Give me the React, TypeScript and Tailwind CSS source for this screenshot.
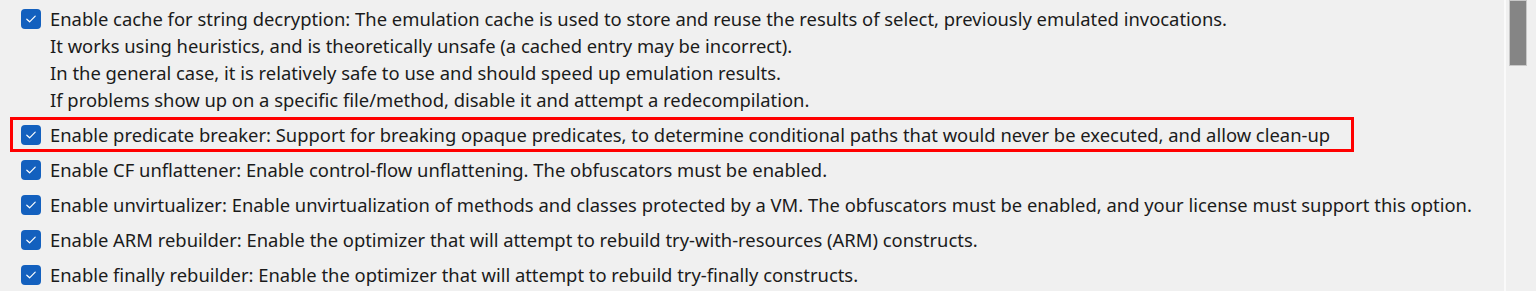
import React from "react";

const font = { fontFamily: '"Noto Sans", "Open Sans", sans-serif' };

function Check() {
	return (
		<span className="mt-[4px] flex h-[20px] w-[20px] flex-shrink-0 items-center justify-center rounded-[4px] bg-[#1360be]">
			<svg width="12" height="10" viewBox="0 0 12 10" fill="none">
				<path d="M1.8 5.2 L4.6 7.8 L10.2 2.2" stroke="#ffffff" strokeWidth="1.2" strokeLinecap="round" strokeLinejoin="round" />
			</svg>
		</span>
	);
}

interface OptionProps {
	lines: string[];
	highlight?: boolean;
}

function Option({ lines, highlight }: OptionProps) {
	if (highlight) {
		return (
			<div className="ml-[10px] flex h-[35px] w-[1344px] items-start gap-[9px] border-[3px] border-[#ff0000] pl-[8px] pt-[1px]">
				<Check />
				<div className="whitespace-nowrap leading-[27px]">{lines[0]}</div>
			</div>
		);
	}
	return (
		<div className="flex items-start gap-[9px] py-[4px] pl-[21px]">
			<Check />
			<div className="whitespace-nowrap leading-[27px]">
				{lines.map((l) => (
					<div key={l}>{l}</div>
				))}
			</div>
		</div>
	);
}

export default function App() {
	return (
		<div className="flex h-[291px] w-[1536px] overflow-hidden bg-[#f0f0f0] text-[18.4px] text-[#1b1b1b]" style={font}>
			<div className="min-w-0 flex-1 pt-[1px]">
				<Option
					lines={[
						"Enable cache for string decryption: The emulation cache is used to store and reuse the results of select, previously emulated invocations.",
						"It works using heuristics, and is theoretically unsafe (a cached entry may be incorrect).",
						"In the general case, it is relatively safe to use and should speed up emulation results.",
						"If problems show up on a specific file/method, disable it and attempt a redecompilation.",
					]}
				/>
				<Option
					highlight
					lines={[
						"Enable predicate breaker: Support for breaking opaque predicates, to determine conditional paths that would never be executed, and allow clean-up",
					]}
				/>
				<Option lines={["Enable CF unflattener: Enable control-flow unflattening. The obfuscators must be enabled."]} />
				<Option
					lines={[
						"Enable unvirtualizer: Enable unvirtualization of methods and classes protected by a VM. The obfuscators must be enabled, and your license must support this option.",
					]}
				/>
				<Option lines={["Enable ARM rebuilder: Enable the optimizer that will attempt to rebuild try-with-resources (ARM) constructs."]} />
				<Option lines={["Enable finally rebuilder: Enable the optimizer that will attempt to rebuild try-finally constructs."]} />
			</div>
			<div className="flex w-[32px] flex-shrink-0 border-l-[2px] border-[#fafafa] bg-[#f0f0f0] pl-[3px]">
				<div className="h-[66px] w-[18px] border border-[#c8c8c8] bg-[#858585]" />
			</div>
		</div>
	);
}
